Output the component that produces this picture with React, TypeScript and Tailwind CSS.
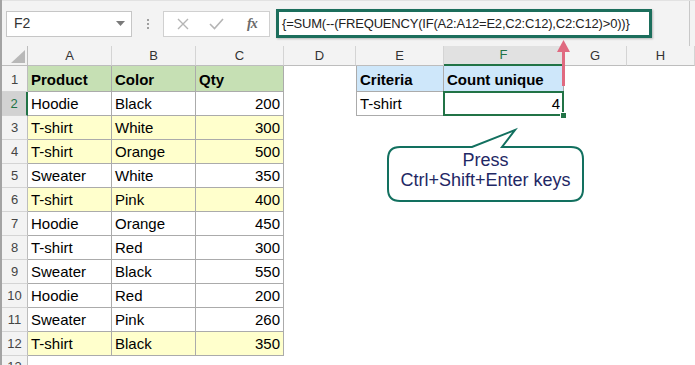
import React from "react";

type Row = { p: string; c: string; q: number; hl: boolean };

const rows: Row[] = [
  { p: "Hoodie", c: "Black", q: 200, hl: false },
  { p: "T-shirt", c: "White", q: 300, hl: true },
  { p: "T-shirt", c: "Orange", q: 500, hl: true },
  { p: "Sweater", c: "White", q: 350, hl: false },
  { p: "T-shirt", c: "Pink", q: 400, hl: true },
  { p: "Hoodie", c: "Orange", q: 450, hl: false },
  { p: "T-shirt", c: "Red", q: 300, hl: false },
  { p: "Sweater", c: "Black", q: 550, hl: false },
  { p: "Hoodie", c: "Red", q: 200, hl: false },
  { p: "Sweater", c: "Pink", q: 260, hl: false },
  { p: "T-shirt", c: "Black", q: 350, hl: true },
];

const cols = ["A", "B", "C", "D", "E", "F", "G", "H"];

const RowHead = ({ n, active }: { n: number; active?: boolean }) => (
  <div
    className={
      "flex items-end justify-center pb-[2px] text-[13px] border-b border-[#d4d4d4] " +
      (active
        ? "bg-[#d2d2d2] text-[#217346] border-r-2 border-r-[#217346]"
        : "bg-[#f3f3f3] text-[#444] border-r border-r-[#bdbdbd]")
    }
  >
    {n}
  </div>
);

const Cell = ({
  children,
  bg = "",
  right,
  bold,
  border = true,
  left,
}: {
  children?: React.ReactNode;
  bg?: string;
  right?: boolean;
  bold?: boolean;
  border?: boolean;
  left?: boolean;
}) => (
  <div
    className={
      "flex items-end pb-[2px] text-[15px] leading-[18px] text-black px-[3px] whitespace-nowrap " +
      bg +
      (right ? " justify-end" : "") +
      (bold ? " font-bold" : "") +
      (border ? " border-r border-b border-[#ababab]" : "") +
      (left ? " border-l border-l-[#ababab]" : "")
    }
  >
    {children}
  </div>
);

export default function App() {
  return (
    <div className="relative w-[695px] h-[365px] overflow-hidden bg-white border-l-2 border-[#a3a3a3] [font-family:'Liberation_Sans',Arial,sans-serif]">
      {/* toolbar */}
      <div className="h-[46px] bg-[#f3f3f3] flex items-center border-t border-[#e2e2e2] pr-[5px]">
        <div className="ml-[4px] w-[126px] h-[26px] bg-white border border-[#c6c6c6] flex items-center justify-between pl-[7px] pr-[6px]">
          <span className="text-[14px] text-[#333]">F2</span>
          <svg width="9" height="5" viewBox="0 0 9 5">
            <polygon points="0,0 9,0 4.5,5" fill="#7a7a7a" />
          </svg>
        </div>
        <div className="w-[31px] flex flex-col items-center gap-[2px]">
          <span className="w-[2px] h-[2px] bg-[#a0a0a0]" />
          <span className="w-[2px] h-[2px] bg-[#a0a0a0]" />
          <span className="w-[2px] h-[2px] bg-[#a0a0a0]" />
        </div>
        <div className="w-[107px] h-[26px] bg-white border border-[#d0d0d0] flex items-center pl-[13px] gap-[20px]">
          <svg width="12" height="12" viewBox="0 0 12 12">
            <path d="M1 1 L11 11 M11 1 L1 11" stroke="#b5b5b5" strokeWidth="1.4" />
          </svg>
          <svg width="15" height="12" viewBox="0 0 15 12">
            <path d="M1 6 L5.5 10.5 L14 1" stroke="#b5b5b5" strokeWidth="1.6" fill="none" />
          </svg>
          <span className="ml-[3px] text-[14px] italic font-bold text-[#6a6a6a] [font-family:'Liberation_Serif',serif] tracking-[-1px]">
            fx
          </span>
        </div>
        <div className="ml-[6px] w-[376px] h-[29px] bg-white border-[3px] border-[#1c6e5c] shadow-[1px_1px_2px_rgba(0,0,0,0.25)] flex items-center pl-[3px]">
          <span className="text-[13px] tracking-[-0.2px] text-[#222] whitespace-nowrap">
            {"{=SUM(--(FREQUENCY(IF(A2:A12=E2,C2:C12),C2:C12)>0))}"}
          </span>
        </div>
        <div className="flex-1 h-full border-r border-[#c8c8c8]" />
      </div>

      {/* sheet */}
      <div className="grid grid-cols-[26px_84px_84px_88px_72px_88px_120px_63px_1fr] grid-rows-[20px_26px_repeat(12,24px)]">
        {/* column headers */}
        <div className="bg-[#f3f3f3] border-r border-b border-[#bdbdbd] flex items-end justify-end pr-[2px] pb-[2px]">
          <svg width="14" height="13" viewBox="0 0 14 13">
            <polygon points="14,0 14,13 0,13" fill="#b8b8b8" />
          </svg>
        </div>
        {cols.map((c) => (
          <div
            key={c}
            className={
              "flex items-center justify-center text-[13px] border-r border-[#d4d4d4] " +
              (c === "F"
                ? "bg-[#e1e1e1] text-[#217346] border-b-2 border-b-[#217346]"
                : "bg-[#f3f3f3] text-[#333] border-b border-b-[#bdbdbd]")
            }
          >
            {c}
          </div>
        ))}

        {/* row 1 */}
        <RowHead n={1} />
        <Cell bg="bg-[#c6e0b4]" bold>Product</Cell>
        <Cell bg="bg-[#c6e0b4]" bold>Color</Cell>
        <Cell bg="bg-[#c6e0b4]" bold>Qty</Cell>
        <Cell border={false} />
        <Cell bg="bg-[#cee7fa]" bold left>Criteria</Cell>
        <Cell bg="bg-[#cee7fa]" bold>Count unique</Cell>
        <Cell border={false} />
        <Cell border={false} />

        {rows.map((r, i) => {
          const n = i + 2;
          const bg = r.hl ? "bg-[#ffffcc]" : "bg-white";
          return (
            <React.Fragment key={n}>
              <RowHead n={n} active={n === 2} />
              <Cell bg={bg}>{r.p}</Cell>
              <Cell bg={bg}>{r.c}</Cell>
              <Cell bg={bg} right>{r.q}</Cell>
              <Cell border={false} />
              {n === 2 ? (
                <>
                  <Cell left>T-shirt</Cell>
                  <div className="relative flex items-end pb-[2px] leading-[18px] justify-end text-[15px] text-black pr-[3px] border-r border-b border-[#ababab]">
                    4
                    <div className="absolute -left-[1px] -top-[1px] -right-[1px] -bottom-[1px] border-2 border-[#217346]" />
                    <div className="absolute -right-[4px] -bottom-[4px] w-[7px] h-[7px] bg-[#217346] border border-white" />
                  </div>
                </>
              ) : (
                <>
                  <Cell border={false} />
                  <Cell border={false} />
                </>
              )}
              <Cell border={false} />
              <Cell border={false} />
            </React.Fragment>
          );
        })}
        <div className="h-[24px] flex items-start justify-center pt-[3px] text-[13px] leading-[15px] text-[#444] bg-[#f3f3f3] border-r border-[#bdbdbd]">
          13
        </div>
      </div>

      {/* arrow */}
      <svg className="absolute left-[553px] top-[38px]" width="18" height="50" viewBox="0 0 18 50">
        <path d="M8.5 12 V48" stroke="#e06a80" strokeWidth="3" />
        <polygon points="2,14 8.5,2 15,14" fill="#e06a80" />
      </svg>

      {/* callout */}
      <svg className="absolute left-[380px] top-[125px]" width="210" height="82" viewBox="0 0 210 82">
        <path
          d="M18 22 H90 L133 5 L120 22 H189 Q201 22 201 34 V64 Q201 76 189 76 H18 Q6 76 6 64 V34 Q6 22 18 22 Z"
          fill="white"
          stroke="#12705f"
          strokeWidth="2"
        />
      </svg>
      <div className="absolute left-[386px] top-[150px] w-[195px] text-center text-[18px] leading-[20px] text-[#1f2865]">
        <div>Press</div>
        <div>Ctrl+Shift+Enter keys</div>
      </div>
    </div>
  );
}
